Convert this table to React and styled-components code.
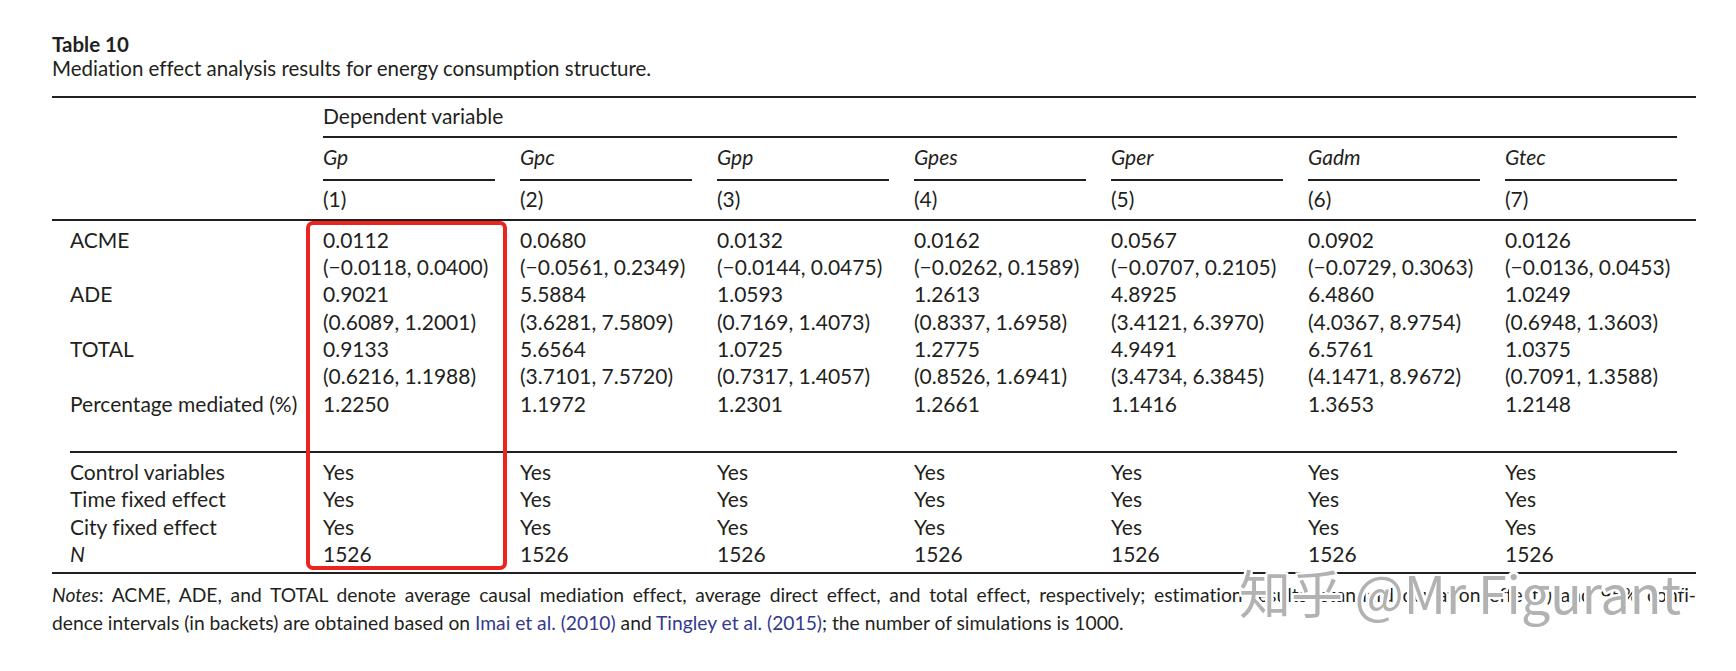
import React from "react";
import styled, { createGlobalStyle } from "styled-components";

const GlobalStyle = createGlobalStyle`
  body {
    margin: 0;
    background: #ffffff;
  }
`;

const columns = ["Gp", "Gpc", "Gpp", "Gpes", "Gper", "Gadm", "Gtec"];

const results = [
  { label: "ACME", values: ["0.0112", "0.0680", "0.0132", "0.0162", "0.0567", "0.0902", "0.0126"] },
  {
    label: "",
    values: [
      "(−0.0118, 0.0400)",
      "(−0.0561, 0.2349)",
      "(−0.0144, 0.0475)",
      "(−0.0262, 0.1589)",
      "(−0.0707, 0.2105)",
      "(−0.0729, 0.3063)",
      "(−0.0136, 0.0453)",
    ],
  },
  { label: "ADE", values: ["0.9021", "5.5884", "1.0593", "1.2613", "4.8925", "6.4860", "1.0249"] },
  {
    label: "",
    values: [
      "(0.6089, 1.2001)",
      "(3.6281, 7.5809)",
      "(0.7169, 1.4073)",
      "(0.8337, 1.6958)",
      "(3.4121, 6.3970)",
      "(4.0367, 8.9754)",
      "(0.6948, 1.3603)",
    ],
  },
  { label: "TOTAL", values: ["0.9133", "5.6564", "1.0725", "1.2775", "4.9491", "6.5761", "1.0375"] },
  {
    label: "",
    values: [
      "(0.6216, 1.1988)",
      "(3.7101, 7.5720)",
      "(0.7317, 1.4057)",
      "(0.8526, 1.6941)",
      "(3.4734, 6.3845)",
      "(4.1471, 8.9672)",
      "(0.7091, 1.3588)",
    ],
  },
  {
    label: "Percentage mediated (%)",
    values: ["1.2250", "1.1972", "1.2301", "1.2661", "1.1416", "1.3653", "1.2148"],
  },
];

const controls = [
  { label: "Control variables", value: "Yes" },
  { label: "Time fixed effect", value: "Yes" },
  { label: "City fixed effect", value: "Yes" },
  { label: "N", value: "1526", italic: true },
];

const App = () => {
  return (
    <>
      <GlobalStyle />
      <Page>
        <TableTitle>Table 10</TableTitle>
        <Caption>Mediation effect analysis results for energy consumption structure.</Caption>
        <TableFrame>
          <Head>
            <GridRow>
              <Cell />
              <SpanHeading>Dependent variable</SpanHeading>
            </GridRow>
            <GridRow>
              <Cell />
              {columns.map((c) => (
                <VarHeading key={c}>{c}</VarHeading>
              ))}
            </GridRow>
            <GridRow>
              <Cell />
              {columns.map((c, i) => (
                <NumHeading key={c}>({i + 1})</NumHeading>
              ))}
            </GridRow>
          </Head>
          <Body>
            {results.map((row, r) => (
              <GridRow key={r}>
                <Label>{row.label}</Label>
                {row.values.map((v, i) => (
                  <Cell key={i}>{v}</Cell>
                ))}
              </GridRow>
            ))}
          </Body>
          <Controls>
            {controls.map((row) => (
              <GridRow key={row.label} $lead={228}>
                <Label $italic={row.italic}>{row.label}</Label>
                {columns.map((c) => (
                  <Cell key={c}>{row.value}</Cell>
                ))}
              </GridRow>
            ))}
          </Controls>
          <Highlight />
        </TableFrame>
        <Notes>
          <JustifiedLine>
            <em>Notes</em>: ACME, ADE, and TOTAL denote average causal mediation effect, average direct
            effect, and total effect, respectively; estimation results (standard deviation effects) and
            95% confi-
          </JustifiedLine>
          <NoteLine>
            dence intervals (in backets) are obtained based on <Ref>Imai et al. (2010)</Ref> and{" "}
            <Ref>Tingley et al. (2015)</Ref>; the number of simulations is 1000.
          </NoteLine>
        </Notes>
        <Watermark>知乎 @Mr Figurant</Watermark>
      </Page>
    </>
  );
};

export default App;

const ink = "#231f20";

const Page = styled.div`
  position: relative;
  width: 1644px;
  padding: 32px 0 0 52px;
  font-family: Lato, "Open Sans", sans-serif;
  font-variant-ligatures: no-common-ligatures;
  color: ${ink};
`;

const TableTitle = styled.div`
  font-size: 20.5px;
  font-weight: 700;
  line-height: 24px;
`;

const Caption = styled.div`
  font-size: 20.5px;
  line-height: 24px;
  margin-bottom: 16px;
`;

const TableFrame = styled.div`
  position: relative;
  border-top: 2px solid ${ink};
  border-bottom: 2px solid ${ink};
  font-size: 21px;
`;

const Head = styled.div`
  border-bottom: 2px solid ${ink};
`;

const GridRow = styled.div`
  display: grid;
  grid-template-columns: ${(p) => p.$lead || 246}px repeat(7, 172px);
  column-gap: 25px;
  line-height: 27.3px;
`;

const Cell = styled.div`
  white-space: nowrap;
`;

const SpanHeading = styled.div`
  grid-column: 2 / -1;
  padding: 4px 0 7px;
  border-bottom: 2px solid ${ink};
`;

const VarHeading = styled.div`
  font-style: italic;
  padding: 5px 0 8px;
  border-bottom: 2px solid ${ink};
`;

const NumHeading = styled.div`
  padding: 4px 0 7px;
`;

const Body = styled.div`
  padding: 5px 0 34px;
`;

const Label = styled.div`
  font-style: ${(p) => (p.$italic ? "italic" : "normal")};
  white-space: nowrap;
  padding-left: 18px;
`;

const Controls = styled.div`
  margin: 0 19px 0 18px;
  padding: 5px 0 5px;
  border-top: 2px solid ${ink};

  ${Label} {
    padding-left: 0;
  }
`;

const Highlight = styled.div`
  position: absolute;
  top: 123px;
  left: 254px;
  width: 201px;
  height: 349px;
  box-sizing: border-box;
  border: 4.5px solid #ec2420;
  border-radius: 7px;
  pointer-events: none;
`;

const Notes = styled.div`
  padding-top: 7px;
  font-size: 19.25px;
  line-height: 28px;
`;

const JustifiedLine = styled.div`
  white-space: nowrap;
  text-align: justify;
  text-align-last: justify;
`;

const NoteLine = styled.div``;

const Ref = styled.span`
  color: #323a8e;
`;

const Watermark = styled.div`
  position: absolute;
  left: 1239px;
  top: 568px;
  font-family: "Noto Sans CJK SC", "Noto Sans", sans-serif;
  font-size: 52px;
  line-height: 48px;
  white-space: nowrap;
  color: rgba(170, 170, 170, 0.9);
  text-shadow: 2px 0 0 #fff, -2px 0 0 #fff, 0 2px 0 #fff, 0 -2px 0 #fff, 2px 2px 0 #fff,
    -2px -2px 0 #fff, 2px -2px 0 #fff, -2px 2px 0 #fff;
  pointer-events: none;
`;
